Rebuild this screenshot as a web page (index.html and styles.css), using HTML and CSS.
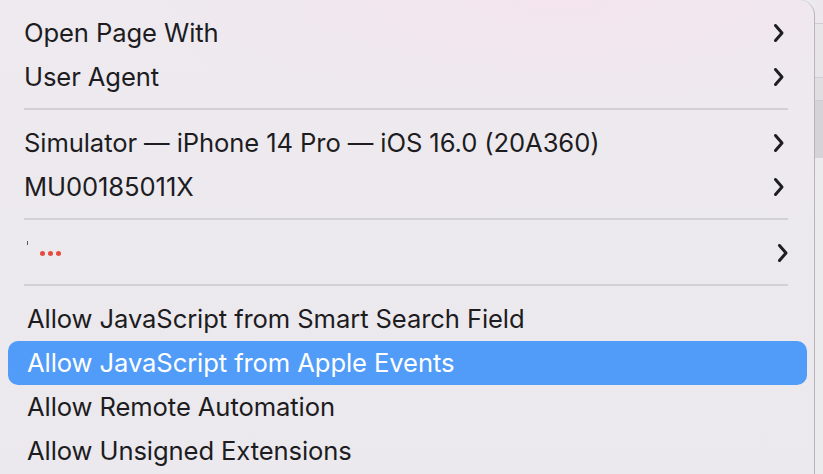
FILE: index.html
```html
<!DOCTYPE html>
<html>
<head>
<meta charset="utf-8">
<link rel="stylesheet" href="styles.css">
</head>
<body>
<div class="screen">
  <div class="menu">
    <div class="item"><span class="label">Open Page With</span><svg class="chev" viewBox="0 0 12 20"><path d="M2.5 2.5 L9 10 L2.5 17.5"/></svg></div>
    <div class="item"><span class="label">User Agent</span><svg class="chev" viewBox="0 0 12 20"><path d="M2.5 2.5 L9 10 L2.5 17.5"/></svg></div>
    <div class="sep"></div>
    <div class="item"><span class="label">Simulator — iPhone 14 Pro — iOS 16.0 (20A360)</span><svg class="chev" viewBox="0 0 12 20"><path d="M2.5 2.5 L9 10 L2.5 17.5"/></svg></div>
    <div class="item"><span class="label">MU00185011X</span><svg class="chev" viewBox="0 0 12 20"><path d="M2.5 2.5 L9 10 L2.5 17.5"/></svg></div>
    <div class="sep"></div>
    <div class="item item-lower"><span class="label dots"><span class="tick"></span><span class="dot"></span><span class="dot"></span><span class="dot"></span></span><svg class="chev" viewBox="0 0 12 20"><path d="M2.5 2.5 L9 10 L2.5 17.5"/></svg></div>
    <div class="sep"></div>
    <div class="item item-lower"><span class="label">Allow JavaScript from Smart Search Field</span></div>
    <div class="item item-lower selected"><span class="label">Allow JavaScript from Apple Events</span></div>
    <div class="item item-lower"><span class="label">Allow Remote Automation</span></div>
    <div class="item item-lower"><span class="label">Allow Unsigned Extensions</span></div>
  </div>
  <div class="behind">
    <div class="b1"></div>
    <div class="b2"></div>
    <div class="b3"></div>
    <div class="b4"></div>
    <div class="b5"></div>
  </div>
</div>
</body>
</html>
```
FILE: styles.css
```css
html, body {
  margin: 0;
  padding: 0;
  width: 823px;
  height: 474px;
  overflow: hidden;
  background: #ebeaec;
}
.screen {
  display: flex;
  width: 823px;
  height: 474px;
}
.menu {
  width: 815px;
  height: 474px;
  box-sizing: border-box;
  padding-top: 11px;
  border-right: 1px solid #b7b5b9;
  border-top-right-radius: 15px;
  background:
    radial-gradient(ellipse 420px 120px at 560px 0px, rgba(246, 226, 238, 0.7), rgba(246, 226, 238, 0) 100%),
    linear-gradient(180deg, #eeeaef 0%, #ebe9ed 100%);
  font-family: Inter, "Noto Sans", "Liberation Sans", sans-serif;
  font-size: 25.6px;
  color: #1d1c1f;
  display: flex;
  flex-direction: column;
}
.item {
  height: 44px;
  margin: 0 7px 0 8px;
  padding: 0 22px 0 16px;
  border-radius: 10px;
  display: flex;
  align-items: center;
  justify-content: space-between;
  flex-shrink: 0;
}
.item-lower {
  padding-left: 19px;
  padding-right: 18px;
}
.label {
  white-space: nowrap;
  letter-spacing: -0.1px;
  padding-bottom: 2px;
}
.selected {
  background: #519cf8;
  color: #ffffff;
}
.chev {
  width: 12px;
  height: 20px;
  flex-shrink: 0;
}
.chev path {
  fill: none;
  stroke: #1e1d20;
  stroke-width: 3;
  stroke-linecap: round;
  stroke-linejoin: round;
}
.sep {
  height: 22px;
  flex-shrink: 0;
  margin: 0 26px 0 24px;
  box-sizing: border-box;
  padding-top: 9px;
}
.sep::before {
  content: "";
  display: block;
  height: 2px;
  background: #d3d0d5;
}
.dots {
  display: flex;
  align-items: center;
  height: 20px;
  position: relative;
  padding-left: 13px;
  padding-bottom: 0;
  gap: 3px;
}
.tick {
  position: absolute;
  left: 0;
  top: -2px;
  width: 1px;
  height: 4px;
  background: #5a585c;
}
.dot {
  width: 5px;
  height: 5px;
  border-radius: 50%;
  background: #e64a3f;
}
.behind {
  flex: 1;
  display: flex;
  flex-direction: column;
}
.b1 {
  height: 23px;
  background: #ebe7ec;
  border-bottom: 1px solid #cfcdd1;
}
.b2 {
  height: 53px;
  background: #e7e5e8;
  border-bottom: 1px solid #cfcdd1;
}
.b3 {
  height: 22px;
  background: #e0dee1;
  border-bottom: 1px solid #cccacd;
}
.b4 {
  height: 57px;
  background: #d5d3d7;
}
.b5 {
  flex: 1;
  background: #ebeaec;
}
```
